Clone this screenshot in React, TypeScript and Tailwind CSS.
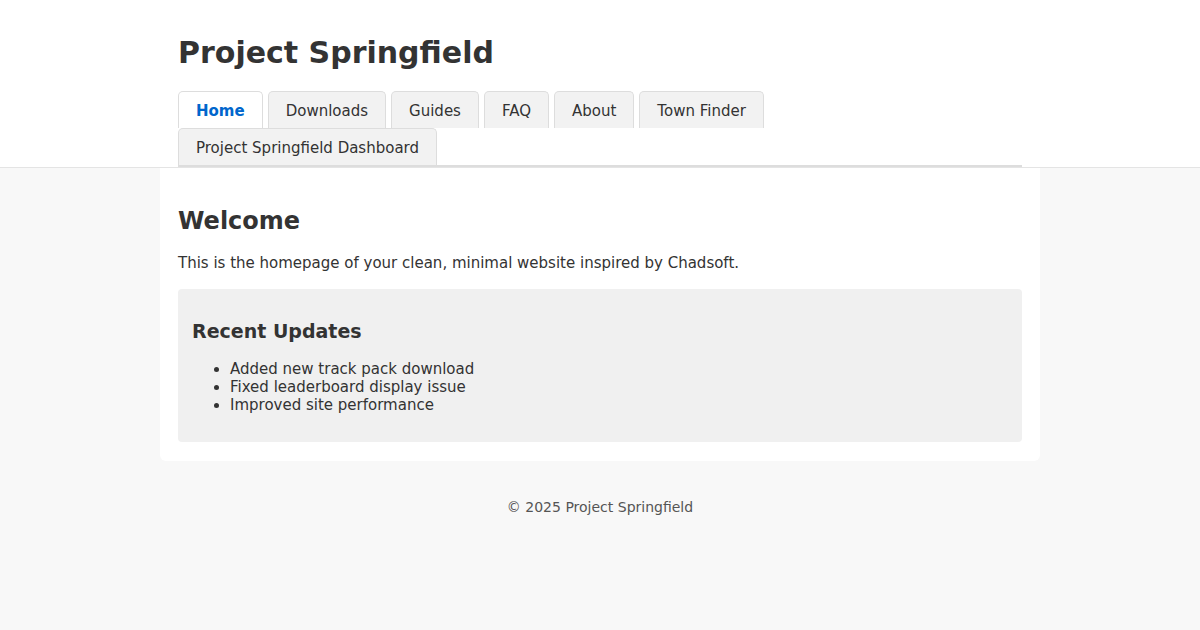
import React from "react";

const tabs = ["Home", "Downloads", "Guides", "FAQ", "About", "Town Finder", "Project Springfield Dashboard"];

const updates = [
  "Added new track pack download",
  "Fixed leaderboard display issue",
  "Improved site performance",
];

export default function App() {
  return (
    <div className="min-h-[630px] bg-[#f8f8f8] text-[#333] font-['DejaVu_Sans',sans-serif]">
      <header className="bg-white border-b border-[#e4e4e4]">
        <div className="max-w-[880px] mx-auto px-[18px] pt-[35px]">
          <h1 className="text-[30px] font-bold leading-[36px] m-0 mb-[20px]">Project Springfield</h1>
          <nav className="border-b-2 border-[#ddd]">
            <ul className="flex flex-wrap gap-x-[5px] m-0 p-0 list-none">
              {tabs.map((t, i) => (
                <li
                  key={t}
                  className={
                    i === 0
                      ? "h-[37px] px-[17px] pt-[2px] flex items-center text-[15px] font-bold text-[#0066cc] bg-white border border-b-0 border-[#ddd] rounded-t-[5px]"
                      : "h-[37px] px-[17px] pt-[2px] flex items-center text-[15px] text-[#333] bg-[#f2f2f2] border border-b-0 border-[#ddd] rounded-t-[5px]"
                  }
                >
                  {t}
                </li>
              ))}
            </ul>
          </nav>
        </div>
      </header>

      <main className="max-w-[880px] mx-auto bg-white rounded-b-[6px] px-[18px] pt-[38px] pb-[19px]">
        <h2 className="text-[24px] font-bold leading-[30px] m-0 mb-[16px]">Welcome</h2>
        <p className="text-[15px] leading-[22px] m-0 mb-[15px]">
          This is the homepage of your clean, minimal website inspired by Chadsoft.
        </p>
        <section className="bg-[#f0f0f0] rounded-[4px] px-[14px] pt-[30px] pb-[28px]">
          <h3 className="text-[19px] font-bold leading-[24px] m-0 mb-[17px]">Recent Updates</h3>
          <ul className="list-disc pl-[38px] m-0 text-[15px] leading-[18px]">
            {updates.map((u) => (
              <li key={u}>{u}</li>
            ))}
          </ul>
        </section>
      </main>

      <footer className="text-center text-[14px] text-[#555] pt-[36px]">© 2025 Project Springfield</footer>
    </div>
  );
}
